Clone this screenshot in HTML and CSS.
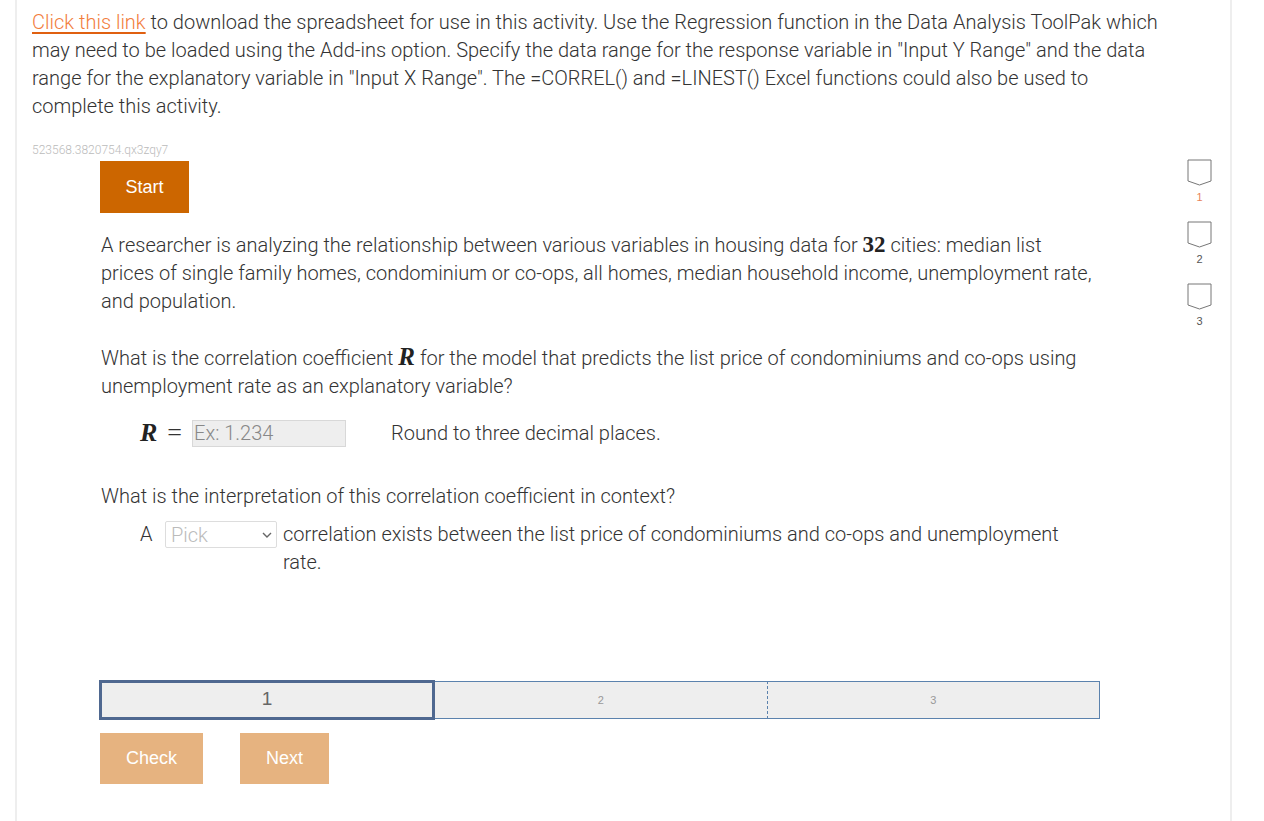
FILE: index.html
```html
<!DOCTYPE html>
<html>
<head>
<meta charset="utf-8">
<link rel="stylesheet" href="styles.css">
</head>
<body>
<div class="card">
  <div class="main">
    <p class="intro"><a class="link" href="#">Click this link</a> to download the spreadsheet for use in this activity. Use the Regression function in the Data Analysis ToolPak which may need to be loaded using the Add-ins option. Specify the data range for the response variable in "Input Y Range" and the data range for the explanatory variable in "Input X Range". The =CORREL() and =LINEST() Excel functions could also be used to complete this activity.</p>
    <div class="qid">523568.3820754.qx3zqy7</div>
    <div class="question">
      <button class="btn start">Start</button>
      <p class="text first">A researcher is analyzing the relationship between various variables in housing data for <span class="num">32</span> cities: median list prices of single family homes, condominium or co-ops, all homes, median household income, unemployment rate, and population.</p>
      <p class="text gap">What is the correlation coefficient <span class="mi">R</span> for the model that predicts the list price of condominiums and co-ops using unemployment rate as an explanatory variable?</p>
      <div class="answer-row">
        <span class="mi big">R</span><span class="eq">=</span>
        <input class="input" type="text" placeholder="Ex: 1.234">
        <span class="hint">Round to three decimal places.</span>
      </div>
      <p class="text gap2">What is the interpretation of this correlation coefficient in context?</p>
      <div class="select-row">
        <span class="label-a">A</span>
        <div class="select"><span class="pick">Pick</span><svg class="chev" width="10" height="6" viewBox="0 0 10 6"><path d="M1 1 L5 5 L9 1" fill="none" stroke="#666" stroke-width="1.4"/></svg></div>
        <span class="sel-text">correlation exists between the list price of condominiums and co-ops and unemployment rate.</span>
      </div>
      <div class="progress">
        <div class="seg active">1</div>
        <div class="seg mid">2</div>
        <div class="seg last">3</div>
      </div>
      <div class="actions">
        <button class="btn light check">Check</button>
        <button class="btn light next">Next</button>
      </div>
    </div>
  </div>
  <div class="sidebar">
    <div class="step">
      <svg width="25" height="27" viewBox="0 0 25 27"><path d="M1 1 H24 V22 L12.5 26 L1 22 Z" fill="#fff" stroke="#777" stroke-width="1"/></svg>
      <span class="step-num cur">1</span>
    </div>
    <div class="step">
      <svg width="25" height="27" viewBox="0 0 25 27"><path d="M1 1 H24 V22 L12.5 26 L1 22 Z" fill="#fff" stroke="#777" stroke-width="1"/></svg>
      <span class="step-num">2</span>
    </div>
    <div class="step">
      <svg width="25" height="27" viewBox="0 0 25 27"><path d="M1 1 H24 V22 L12.5 26 L1 22 Z" fill="#fff" stroke="#777" stroke-width="1"/></svg>
      <span class="step-num">3</span>
    </div>
  </div>
</div>
</body>
</html>
```
FILE: styles.css
```css
html, body {
  margin: 0;
  padding: 0;
  background: #fff;
}
body {
  font-family: Roboto, "Liberation Sans", sans-serif;
  font-weight: 300;
  color: #333;
  font-size: 20px;
  line-height: 28px;
}
.card {
  margin-left: 15px;
  width: 1217px;
  min-height: 821px;
  border-left: 2px solid #eee;
  border-right: 2px solid #eee;
  display: flex;
  box-sizing: border-box;
}
.main {
  padding-left: 15px;
  width: 1137px;
  flex: none;
}
.intro {
  margin: 8px 0 0 0;
}
.link {
  color: #f27d3c;
  text-decoration: underline;
  text-decoration-color: #e06010;
  text-underline-offset: 3px;
}
.qid {
  margin-top: 23px;
  font-size: 12px;
  line-height: 14px;
  color: #bbb;
}
.question {
  margin-left: 68px;
  width: 1000px;
  padding-top: 4px;
}
.btn {
  border: none;
  font-family: "Liberation Sans", Arial, sans-serif;
  font-size: 18px;
  color: #fff;
  height: 52px;
  padding: 0 24px;
  display: inline-block;
  cursor: pointer;
}
.start {
  background: #cc6600;
  width: 89px;
  padding: 0;
}
.text {
  margin: 0;
  padding-left: 1px;
  max-width: 994px;
}
.text.first {
  margin-top: 18px;
}
.text.gap {
  margin-top: 28px;
}
.text.gap2 {
  margin-top: 34px;
}
.num {
  font-family: "Liberation Serif", "DejaVu Serif", serif;
  font-weight: 700;
  font-size: 23px;
  color: #222;
}
.mi {
  font-family: "Liberation Serif", "DejaVu Serif", serif;
  font-style: italic;
  font-weight: 700;
  font-size: 25px;
  color: #222;
}
.answer-row {
  margin-top: 18px;
  height: 30px;
  display: flex;
  align-items: center;
  padding-left: 40px;
}
.mi.big {
  font-size: 26px;
}
.eq {
  font-family: "Liberation Serif", "DejaVu Serif", serif;
  font-size: 26px;
  font-weight: 400;
  margin: 0 10px 0 10px;
  color: #333;
}
.input {
  width: 154px;
  height: 27px;
  box-sizing: border-box;
  background: #eee;
  border: 1px solid #d8d8d8;
  font-family: Roboto, sans-serif;
  font-weight: 300;
  font-size: 20px;
  padding: 0 0 0 1px;
  margin: 0;
}
.input::placeholder {
  color: #888;
}
.hint {
  margin-left: 45px;
}
.select-row {
  margin-top: 10px;
  display: flex;
  align-items: flex-start;
  padding-left: 40px;
}
.label-a {
  width: 25px;
  flex: none;
}
.select {
  margin-top: 1px;
  width: 112px;
  height: 27px;
  box-sizing: border-box;
  border: 1px solid #ddd;
  border-radius: 2px;
  display: flex;
  align-items: center;
  justify-content: space-between;
  padding: 0 4px 0 5px;
  flex: none;
}
.pick {
  color: #bbb;
}
.chev {
  display: block;
}
.sel-text {
  margin-left: 6px;
  width: 800px;
}
.progress {
  margin-top: 104px;
  margin-left: -1px;
  width: 1001px;
  height: 40px;
  display: flex;
  font-family: "Liberation Sans", Arial, sans-serif;
  font-weight: 400;
}
.seg {
  flex: 1;
  background: #eee;
  box-sizing: border-box;
  display: flex;
  align-items: center;
  justify-content: center;
  border-top: 1px solid #5b82ad;
  border-bottom: 1px solid #5b82ad;
  margin: 1px 0;
  font-size: 11px;
  color: #999;
}
.seg.active {
  flex: none;
  width: 336px;
  margin: 0;
  border: 3px solid #4f6890;
  font-size: 19px;
  color: #666;
  line-height: 1;
  padding-bottom: 3px;
}
.seg.mid {
  border-right: 1px dashed #5b82ad;
}
.seg.last {
  border-right: 1px solid #5b82ad;
}
.actions {
  margin-top: 13px;
  display: flex;
  gap: 37px;
}
.btn.light {
  background: #e6b380;
  height: 51px;
}
.check {
  width: 103px;
  padding: 0;
}
.next {
  width: 89px;
  padding: 0;
}
.sidebar {
  flex: 1;
  display: flex;
  flex-direction: column;
  align-items: center;
  padding-top: 159px;
}
.step {
  display: flex;
  flex-direction: column;
  align-items: center;
  height: 62px;
}
.step svg {
  display: block;
}
.step-num {
  font-family: "Liberation Sans", Arial, sans-serif;
  font-size: 11px;
  line-height: 14px;
  margin-top: 4px;
  color: #555;
  font-weight: 400;
}
.step-num.cur {
  color: #e8835a;
}
```
